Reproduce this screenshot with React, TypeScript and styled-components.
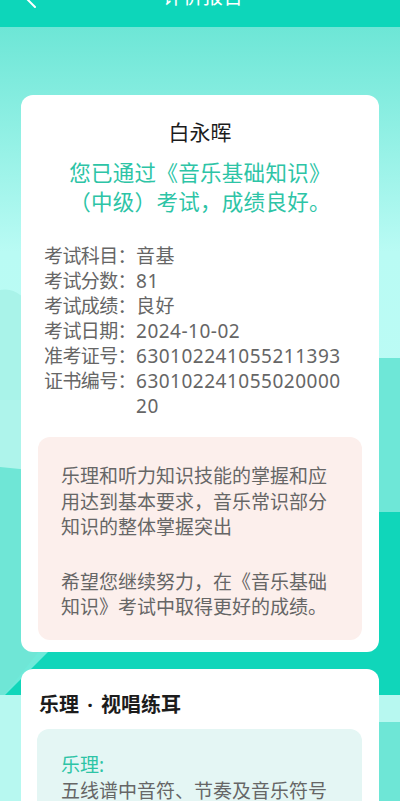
import React from 'react'
import styled, { createGlobalStyle } from 'styled-components'

const GlobalStyle = createGlobalStyle`
  html, body {
    margin: 0;
    padding: 0;
    background: #6feada;
  }
  body {
    font-family: "Noto Sans", "Noto Sans CJK SC", sans-serif;
  }
  * {
    box-sizing: border-box;
  }
`

const Page = styled.div`
  position: relative;
  width: 400px;
  min-height: 801px;
  overflow: hidden;
`

const Backdrop = styled.svg`
  position: absolute;
  left: 0;
  top: 0;
  z-index: 0;
`

const Header = styled.header`
  position: relative;
  z-index: 1;
  height: 27px;
  overflow: hidden;
  background: #0dd6ba;
  display: flex;
  align-items: flex-end;
  padding: 0 17px 0 23px;
`

const BackIcon = styled.svg`
  display: block;
  flex: none;
  margin-bottom: 19px;
`

const Title = styled.h1`
  flex: 1;
  margin: 0 0 20px;
  font-size: 20px;
  line-height: 20px;
  font-weight: 400;
  color: #fff;
  text-align: center;
`

const Spacer = styled.span`
  flex: none;
  width: 14px;
`

const Content = styled.main`
  position: relative;
  z-index: 1;
  display: flex;
  flex-direction: column;
  gap: 17px;
  padding: 68px 21px 40px;
`

const Card = styled.section<{ $compact?: boolean }>`
  background: #fff;
  border-radius: 12px;
  padding: ${(p) => (p.$compact ? '22px 17px 20px 16px' : '23px 17px 12px')};
`

const Name = styled.div`
  text-align: center;
  font-size: 21px;
  line-height: 28px;
  color: #1c1c1c;
`

const Headline = styled.p`
  margin: 12px 0 0;
  text-align: center;
  font-size: 21.5px;
  line-height: 29px;
  letter-spacing: 0.3px;
  color: #2dc4a6;
`

const InfoList = styled.dl`
  margin: 28px 0 0;
  padding: 0 14px 0 6px;
  display: grid;
  grid-template-columns: auto 1fr;
  font-size: 19px;
  line-height: 25px;
  color: #666;
`

const Label = styled.dt`
  margin: 0;
  letter-spacing: -0.6px;
`

const Value = styled.dd`
  margin: 0;
  word-break: break-all;
  letter-spacing: 0.5px;
`

const Note = styled.div<{ $tone: 'pink' | 'mint' }>`
  border-radius: 12px;
  background: ${(p) => (p.$tone === 'pink' ? '#fcefec' : '#e4f6f4')};
  padding: ${(p) => (p.$tone === 'pink' ? '27px 23px 19px' : '24px 24px 24px')};
  margin-top: ${(p) => (p.$tone === 'pink' ? '18px' : '10px')};
  display: flex;
  flex-direction: column;
  gap: 29px;
`

const Paragraph = styled.p`
  margin: 0;
  font-size: 19px;
  line-height: 25.5px;
  color: #666;
`

const SectionTitle = styled.h2`
  margin: 0;
  padding-left: 2px;
  font-size: 20px;
  line-height: 28px;
  font-weight: 700;
  word-spacing: 3px;
  color: #1c1c1c;
`

const Topic = styled.div`
  font-size: 19px;
  line-height: 25px;
`

const TopicName = styled.div`
  color: #2dc4a6;
  margin-bottom: 1px;
`

const TopicText = styled.div`
  color: #666;
`

const info = [
  ['考试科目：', '音基'],
  ['考试分数：', '81'],
  ['考试成绩：', '良好'],
  ['考试日期：', '2024-10-02'],
  ['准考证号：', '630102241055211393'],
  ['证书编号：', '63010224105502000020'],
]

export default function App() {
  return (
    <Page>
      <GlobalStyle />
      <Backdrop width="400" height="801" viewBox="0 0 400 801">
        <defs>
          <linearGradient id="sky" x1="0" y1="0" x2="0" y2="1">
            <stop offset="0" stopColor="#6de6d6" />
            <stop offset="0.45" stopColor="#b9fbf4" />
            <stop offset="1" stopColor="#bdfbf5" />
          </linearGradient>
        </defs>
        <rect x="0" y="27" width="400" height="500" fill="url(#sky)" />
        <path d="M0 290 C 10 288, 18 292, 26 300 L 60 420 L 0 420 Z" fill="#a9f3e9" />
        <rect x="0" y="400" width="80" height="70" fill="#aef4eb" />
        <path d="M0 467 L 80 475 L 80 560 L 0 560 Z" fill="#6fe6d6" />
        <path d="M320 358 L 400 358 L 400 512 L 320 512 Z" fill="#6ee7d7" />
        <path d="M0 560 L 80 560 L 80 600 L 0 700 Z" fill="#6fe6d6" />
        <path d="M0 700 L 80 620 L 80 512 L 400 512 L 400 695 L 0 695 Z" fill="#10d6ba" />
        <path d="M0 695 L 400 695 L 400 801 L 0 801 Z" fill="#b7f8f0" />
        <path d="M330 722 L 400 722 L 400 801 L 330 801 Z" fill="#6ee6d6" />
      </Backdrop>
      <Header>
        <BackIcon width="14" height="22" viewBox="0 0 14 22">
          <path d="M12 1 L2 11 L12 21" fill="none" stroke="#fff" strokeWidth="2" strokeLinecap="round" strokeLinejoin="round" />
        </BackIcon>
        <Title>评价报告</Title>
        <Spacer />
      </Header>
      <Content>
        <Card>
          <Name>白永晖</Name>
          <Headline>
            您已通过《音乐基础知识》
            <br />
            （中级）考试，成绩良好。
          </Headline>
          <InfoList>
            {info.map(([label, value]) => (
              <React.Fragment key={label}>
                <Label>{label}</Label>
                <Value>{value}</Value>
              </React.Fragment>
            ))}
          </InfoList>
          <Note $tone="pink">
            <Paragraph>乐理和听力知识技能的掌握和应用达到基本要求，音乐常识部分知识的整体掌握突出</Paragraph>
            <Paragraph>希望您继续努力，在《音乐基础知识》考试中取得更好的成绩。</Paragraph>
          </Note>
        </Card>
        <Card $compact>
          <SectionTitle>乐理 · 视唱练耳</SectionTitle>
          <Note $tone="mint">
            <Topic>
              <TopicName>乐理:</TopicName>
              <TopicText>五线谱中音符、节奏及音乐符号的识读与书写</TopicText>
            </Topic>
          </Note>
        </Card>
      </Content>
    </Page>
  )
}
